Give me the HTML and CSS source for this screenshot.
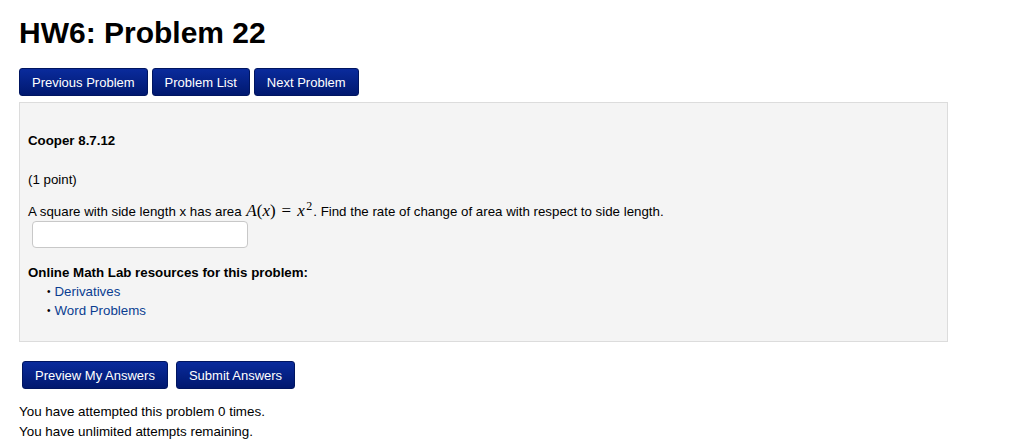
FILE: index.html
```html
<!DOCTYPE html>
<html>
<head>
<meta charset="utf-8">
<title>HW6: Problem 22</title>
<link rel="stylesheet" href="styles.css">
</head>
<body>
<main class="page">
  <h1 class="title">HW6: Problem 22</h1>
  <nav class="nav">
    <a class="btn" href="#">Previous Problem</a>
    <a class="btn" href="#">Problem List</a>
    <a class="btn" href="#">Next Problem</a>
  </nav>
  <section class="problem">
    <div class="source">Cooper 8.7.12</div>
    <div class="points">(1 point)</div>
    <div class="statement">A square with side length x has area <span class="math"><i>A</i>(<i>x</i>)<span class="eq">=</span><i>x</i><sup>2</sup></span>. Find the rate of change of area with respect to side length.</div>
    <input class="answer" type="text">
    <div class="resources">
      <div class="res-title">Online Math Lab resources for this problem:</div>
      <ul class="res-list">
        <li><a href="#">Derivatives</a></li>
        <li><a href="#">Word Problems</a></li>
      </ul>
    </div>
  </section>
  <div class="actions">
    <button class="btn">Preview My Answers</button>
    <button class="btn">Submit Answers</button>
  </div>
  <p class="info">You have attempted this problem 0 times.<br>You have unlimited attempts remaining.</p>
</main>
</body>
</html>
```
FILE: styles.css
```css
html, body {
  margin: 0;
  padding: 0;
  background: #fff;
}
.page {
  font-family: "Liberation Sans", Arial, sans-serif;
  font-size: 13.3px;
  color: #000;
  padding: 0 0 0 19px;
  width: 929px;
}
.title {
  margin: 0;
  padding-top: 16px;
  font-size: 30px;
  line-height: 34px;
  font-weight: bold;
}
.nav {
  display: flex;
  gap: 4px;
  margin-top: 18px;
}
.btn {
  display: inline-flex;
  align-items: center;
  height: 28px;
  box-sizing: border-box;
  padding: 0 12px;
  border: 1px solid #001560;
  border-radius: 3px;
  background: linear-gradient(#0a2b9c, #00186f);
  color: #fff;
  font-family: "Liberation Sans", Arial, sans-serif;
  font-size: 13px;
  text-decoration: none;
  cursor: pointer;
}
.problem {
  margin-top: 6px;
  height: 240px;
  box-sizing: border-box;
  border: 1px solid #dcdcdc;
  background: #f4f4f4;
  padding: 29px 8px 0 8px;
}
.source {
  font-weight: bold;
  line-height: 18px;
}
.points {
  margin-top: 21px;
  line-height: 18px;
}
.statement {
  margin-top: 14px;
  line-height: 18px;
}
.math {
  font-family: "Liberation Serif", "Times New Roman", serif;
  font-size: 17px;
  line-height: 0;
  margin-left: 1px;
}
.math .eq {
  margin: 0 6px;
}
.math sup {
  font-size: 12px;
  line-height: 0;
  vertical-align: 6px;
  margin-left: 1.5px;
  margin-right: 1px;
}
.answer {
  display: block;
  margin: 0 0 0 4px;
  width: 216px;
  height: 27px;
  box-sizing: border-box;
  border: 1px solid #c8c8c8;
  border-radius: 4px;
  background: #fff;
}
.resources {
  margin-top: 16px;
}
.res-title {
  font-weight: bold;
  line-height: 18px;
}
.res-list {
  margin: 0;
  padding: 0 0 0 19px;
  list-style: none;
}
.res-list li {
  line-height: 19px;
}
.res-list li::before {
  content: "\2022";
  font-size: 10px;
  margin-right: 4px;
  vertical-align: 1px;
}
.res-list a {
  color: #0a3d91;
  text-decoration: none;
}
.actions {
  display: flex;
  gap: 8px;
  margin: 19px 0 0 3px;
}
.info {
  margin: 13px 0 0 0;
  font-size: 13.4px;
  line-height: 20px;
}
```
